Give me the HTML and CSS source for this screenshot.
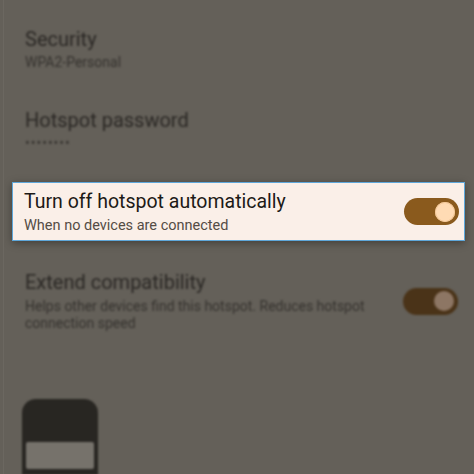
FILE: index.html
```html
<!DOCTYPE html>
<html lang="en">

<head>
    <meta charset="UTF-8">
    <meta name="viewport" content="width=device-width, initial-scale=1.0">
    <title>Hotspot settings</title>
    <link rel="stylesheet" href="styles.css">
</head>

<body>
    <div class="screen">
        <div class="row dim">
            <div class="title">Security</div>
            <div class="sub">WPA2-Personal</div>
        </div>
        <div class="row dim">
            <div class="title">Hotspot password</div>
            <div class="sub dots">••••••••</div>
        </div>
        <div class="card">
            <div class="text">
                <div class="title">Turn off hotspot automatically</div>
                <div class="sub">When no devices are connected</div>
            </div>
            <div class="toggle"><span class="thumb"></span></div>
        </div>
        <div class="row dim split">
            <div class="text">
                <div class="title">Extend compatibility</div>
                <div class="sub">Helps other devices find this hotspot. Reduces hotspot connection speed</div>
            </div>
            <div class="toggle"><span class="thumb"></span></div>
        </div>
        <div class="nav dim">
            <div class="key">
                <div class="band"></div>
            </div>
        </div>
    </div>
</body>

</html>
```

FILE: styles.css
```css
body {
    margin: 0;
    background: #646059;
    font-family: Roboto, "Noto Sans", sans-serif;
    width: 474px;
    height: 474px;
    overflow: hidden;
}

.screen {
    padding-top: 27px;
    border-left: 1px solid #6b6760;
    margin-left: 3px;
    height: 447px;
    overflow: hidden;
}

.row {
    padding: 0 21px;
}

.dim {
    filter: blur(1.3px);
    color: #2b2825;
}

.dim .title {
    font-size: 20px;
    line-height: 24px;
}

.dim .sub {
    font-size: 14px;
    line-height: 17px;
    margin-top: 3px;
    color: #36332f;
}

.row + .row {
    margin-top: 37px;
}

.dots {
    letter-spacing: 1px;
    font-size: 9px;
}

.card {
    display: flex;
    align-items: center;
    justify-content: space-between;
    margin: 30px 9px 0 8px;
    height: 57px;
    padding: 0 5px 0 11px;
    background: #faefe8;
    border: 1.5px solid #5ea7da;
    box-shadow: 0 2px 8px rgba(0, 0, 0, 0.35);
}

.card .title {
    font-size: 19.5px;
    line-height: 25px;
    color: #1d1a17;
}

.card .sub {
    font-size: 14.5px;
    line-height: 19px;
    margin-top: 2px;
    color: #544c45;
}

.toggle {
    width: 55px;
    height: 27px;
    border-radius: 14px;
    background: #8a5a1d;
    display: flex;
    align-items: center;
    justify-content: flex-end;
    padding-right: 4px;
    box-sizing: border-box;
    flex-shrink: 0;
}

.thumb {
    width: 20px;
    height: 20px;
    border-radius: 50%;
    background: #ffdbb4;
    box-shadow: 0 0 0 1px #f3c796 inset;
}

.split {
    display: flex;
    justify-content: space-between;
    align-items: center;
    margin-top: 29px;
    padding-right: 16px;
}

.split .text {
    width: 370px;
}

.split .sub {
    margin-top: 4px;
}

.split .toggle {
    background: #4a3318;
}

.split .thumb {
    background: #8d7664;
    box-shadow: none;
}

.nav {
    margin-top: 67px;
    padding-left: 18px;
}

.key {
    width: 76px;
    height: 76px;
    border-radius: 14px 14px 0 0;
    background: #282622;
    padding: 43px 4px 0;
    box-sizing: border-box;
}

.band {
    height: 27px;
    background: #76726b;
    border-radius: 2px;
}
```
